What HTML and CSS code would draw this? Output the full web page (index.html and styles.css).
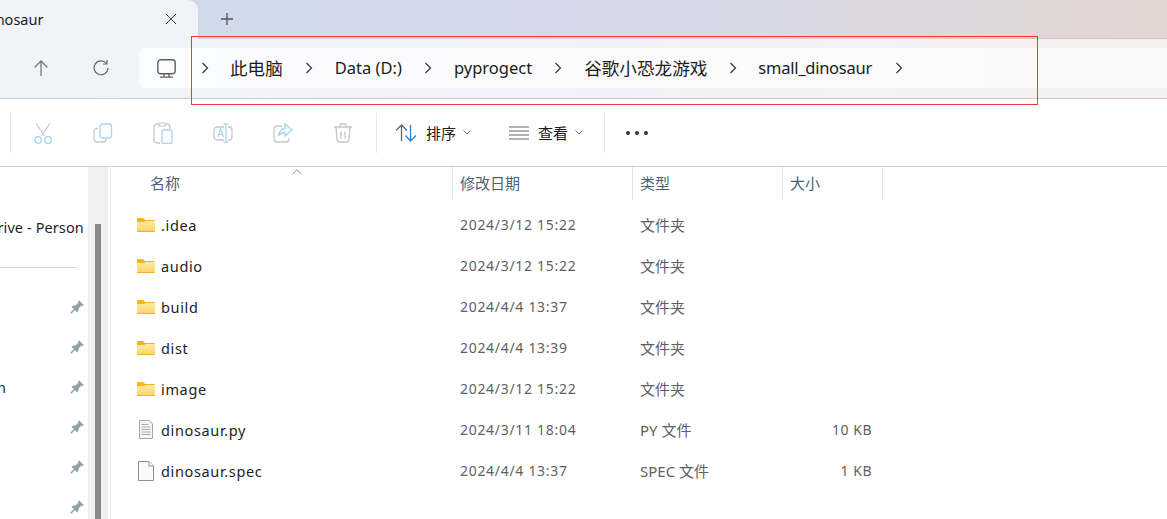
FILE: index.html
```html
<!DOCTYPE html>
<html lang="zh">
<head>
<meta charset="utf-8">
<title>small_dinosaur</title>
<link rel="stylesheet" href="styles.css">
</head>
<body>
<div class="window">
  <svg class="defs" width="0" height="0">
    <defs>
      <linearGradient id="fg" x1="0" y1="0" x2="0" y2="1"><stop offset="0" stop-color="#fdeaa6"/><stop offset="1" stop-color="#ffd460"/></linearGradient>
      <symbol id="folder" viewBox="0 0 18 14"><path d="M0 1a1 1 0 0 1 1-1h5l2 2h9a1 1 0 0 1 1 1v10a1 1 0 0 1-1 1H1a1 1 0 0 1-1-1z" fill="#f6b420"/><path d="M0 4h7l2-1h9v10a1 1 0 0 1-1 1H1a1 1 0 0 1-1-1z" fill="url(#fg)"/><path d="M0 13.5h18" stroke="#eab23c"/></symbol>
      <symbol id="pin" viewBox="0 0 14 14"><path d="M9 .3L13.700 5l-1.300 1-1-.4-2.900 2.900v2.600L7 12.300 1.700 7 3 5.500h2.600l2.900-2.900-.4-1z" fill="#94a1a9"/><path d="M4.500 9.500L.7 13.300" stroke="#94a1a9" stroke-width="1.400" fill="none"/></symbol>
    </defs>
  </svg>

  <header class="tabstrip">
    <div class="tab">
      <span class="tab-label">dinosaur</span>
      <svg class="tab-close" width="12" height="12" viewBox="0 0 12 12"><path d="M1 1l10 10M11 1L1 11" stroke="#3d3d3d" stroke-width="1" fill="none"/></svg>
    </div>
    <svg class="tab-add" width="14" height="14" viewBox="0 0 14 14"><path d="M7 1v12M1 7h12" stroke="#555" stroke-width="1.300" fill="none"/></svg>
  </header>

  <nav class="navbar">
    <button class="nav-btn">
      <svg width="18" height="18" viewBox="0 0 18 18"><path d="M9 2v15M2.500 8.500L9 2l6.500 6.500" stroke="#777" stroke-width="1.300" fill="none"/></svg>
    </button>
    <button class="nav-btn">
      <svg width="18" height="18" viewBox="0 0 18 18"><path d="M14.500 4.500A7 7 0 1 0 16 9" stroke="#666" stroke-width="1.200" fill="none"/><path d="M15 1v4h-4" stroke="#666" stroke-width="1.200" fill="none"/></svg>
    </button>
    <div class="address">
      <svg class="pc-icon" width="19" height="19" viewBox="0 0 19 19"><rect x=".8" y=".8" width="17.400" height="14" rx="3" fill="none" stroke="#5f5f5f" stroke-width="1.400"/><path d="M7 15v3M12 15v3M3 18.200h13" stroke="#5f5f5f" stroke-width="1.300" fill="none"/></svg>
      <svg class="crumb-sep first" width="8" height="12" viewBox="0 0 8 12"><path d="M1.500 1l5 5-5 5" stroke="#333" stroke-width="1.200" fill="none"/></svg>
      <span class="crumb cjk">此电脑</span>
      <svg class="crumb-sep" width="8" height="12" viewBox="0 0 8 12"><path d="M1.500 1l5 5-5 5" stroke="#333" stroke-width="1.200" fill="none"/></svg>
      <span class="crumb">Data (D:)</span>
      <svg class="crumb-sep" width="8" height="12" viewBox="0 0 8 12"><path d="M1.500 1l5 5-5 5" stroke="#333" stroke-width="1.200" fill="none"/></svg>
      <span class="crumb">pyprogect</span>
      <svg class="crumb-sep" width="8" height="12" viewBox="0 0 8 12"><path d="M1.500 1l5 5-5 5" stroke="#333" stroke-width="1.200" fill="none"/></svg>
      <span class="crumb cjk">谷歌小恐龙游戏</span>
      <svg class="crumb-sep" width="8" height="12" viewBox="0 0 8 12"><path d="M1.500 1l5 5-5 5" stroke="#333" stroke-width="1.200" fill="none"/></svg>
      <span class="crumb narrow">small_dinosaur</span>
      <svg class="crumb-sep" width="8" height="12" viewBox="0 0 8 12"><path d="M1.500 1l5 5-5 5" stroke="#333" stroke-width="1.200" fill="none"/></svg>
    </div>
  </nav>

  <section class="commandbar">
    <span class="vsep"></span>
    <button class="cmd"><svg width="20" height="22" viewBox="0 0 20 22"><path d="M3 1l8.500 13M17 1L8.500 14" stroke="#c8c8c8" stroke-width="1.200" fill="none"/><circle cx="5" cy="18" r="3.300" fill="none" stroke="#a8d3f5" stroke-width="1.300"/><circle cx="15" cy="18" r="3.300" fill="none" stroke="#a8d3f5" stroke-width="1.300"/></svg></button>
    <button class="cmd"><svg width="20" height="20" viewBox="0 0 20 20"><path d="M5 5.500H4a3 3 0 0 0-3 3V16a3 3 0 0 0 3 3h6a3 3 0 0 0 3-3v-.500" fill="none" stroke="#c8c8c8" stroke-width="1.300"/><rect x="7" y="1" width="11.500" height="14" rx="2.500" fill="#fff" stroke="#a8d3f5" stroke-width="1.300"/></svg></button>
    <button class="cmd"><svg width="20" height="22" viewBox="0 0 20 22"><path d="M7 21H4a3 3 0 0 1-3-3V5a3 3 0 0 1 3-3h10a3 3 0 0 1 3 3v2" fill="none" stroke="#c8c8c8" stroke-width="1.300"/><rect x="6" y="1" width="6.500" height="3" rx="1" fill="#fff" stroke="#c8c8c8" stroke-width="1.200"/><rect x="9" y="8" width="10" height="13.500" rx="2" fill="#fff" stroke="#a8d3f5" stroke-width="1.300"/></svg></button>
    <button class="cmd"><svg width="20" height="20" viewBox="0 0 20 20"><rect x="1" y="4" width="18" height="13" rx="3" fill="none" stroke="#c8c8c8" stroke-width="1.300"/><rect x="11" y="0" width="4" height="20" fill="#fff"/><path d="M13 1v18M10.500 .8h5M10.500 19.200h5" stroke="#a8d3f5" stroke-width="1.300" fill="none"/><path d="M4.500 14l3-8 3 8M5.500 11.500h4" stroke="#a8d3f5" stroke-width="1.200" fill="none"/></svg></button>
    <button class="cmd"><svg width="20" height="20" viewBox="0 0 20 20"><path d="M9 3H4a3 3 0 0 0-3 3v10a3 3 0 0 0 3 3h9a3 3 0 0 0 3-3v-1" fill="none" stroke="#c8c8c8" stroke-width="1.300"/><path d="M12 1l7 6-7 6V9.500c-3 0-5 1-6.500 3.500 .5-4 3-7 6.500-7.500z" fill="#fff" stroke="#a8d3f5" stroke-width="1.300"/></svg></button>
    <button class="cmd"><svg width="20" height="20" viewBox="0 0 20 20"><path d="M1 4h18M7 4V2a1 1 0 0 1 1-1h4a1 1 0 0 1 1 1v2M3 4l1 13a2.500 2.500 0 0 0 2.500 2h7A2.500 2.500 0 0 0 16 17l1-13M8 8.500v7M12 8.500v7" fill="none" stroke="#c8c8c8" stroke-width="1.300"/></svg></button>
    <span class="vsep gap-left"></span>
    <button class="cmd-text sort">
      <svg width="22" height="18" viewBox="0 0 22 18"><path d="M6.500 17V1M1 6.500l5.500-5.500L12 6.500" stroke="#666" stroke-width="1.300" fill="none"/><path d="M15.500 1v16M10.500 11.500l5 5.500 5.500-5.500" stroke="#1e88e0" stroke-width="1.300" fill="none"/></svg>
      <span class="cmd-label">排序</span>
      <svg class="chev" width="8" height="5" viewBox="0 0 8 5"><path d="M.500 .500L4 4 7.500 .500" stroke="#777" fill="none"/></svg>
    </button>
    <button class="cmd-text view">
      <svg width="20" height="14" viewBox="0 0 20 14"><path d="M0 1h20M0 5h20M0 9h20M0 13h20" stroke="#666" stroke-width="1.200" fill="none"/></svg>
      <span class="cmd-label">查看</span>
      <svg class="chev" width="8" height="5" viewBox="0 0 8 5"><path d="M.500 .500L4 4 7.500 .500" stroke="#777" fill="none"/></svg>
    </button>
    <span class="vsep gap-view"></span>
    <div class="more"><i></i><i></i><i></i></div>
  </section>

  <div class="content">
    <aside class="sidebar">
      <div class="side-item"><span class="side-label onedrive">OneDrive - Personal</span></div>
      <div class="side-rule"></div>
      <div class="side-item"><svg class="side-pin" width="14" height="14"><use href="#pin"/></svg></div>
      <div class="side-item"><svg class="side-pin" width="14" height="14"><use href="#pin"/></svg></div>
      <div class="side-item"><span class="side-label tail">n</span><svg class="side-pin" width="14" height="14"><use href="#pin"/></svg></div>
      <div class="side-item"><svg class="side-pin" width="14" height="14"><use href="#pin"/></svg></div>
      <div class="side-item"><svg class="side-pin" width="14" height="14"><use href="#pin"/></svg></div>
      <div class="side-item"><svg class="side-pin" width="14" height="14"><use href="#pin"/></svg></div>
    </aside>
    <div class="scrolltrack"><div class="scrollthumb"></div></div>

    <main class="files">
      <div class="row head">
        <div class="cell name">名称<svg class="sort-caret" width="10" height="6" viewBox="0 0 10 6"><path d="M.500 5L5 .800 9.500 5" stroke="#8a8a8a" fill="none"/></svg></div>
        <div class="cell">修改日期</div>
        <div class="cell">类型</div>
        <div class="cell">大小</div>
      </div>

      <div class="row item"><div class="cell name"><svg class="ficon" width="18" height="14"><use href="#folder"/></svg><span>.idea</span></div><div class="cell date">2024/3/12 15:22</div><div class="cell type">文件夹</div><div class="cell size"></div></div>
      <div class="row item"><div class="cell name"><svg class="ficon" width="18" height="14"><use href="#folder"/></svg><span>audio</span></div><div class="cell date">2024/3/12 15:22</div><div class="cell type">文件夹</div><div class="cell size"></div></div>
      <div class="row item"><div class="cell name"><svg class="ficon" width="18" height="14"><use href="#folder"/></svg><span>build</span></div><div class="cell date">2024/4/4 13:37</div><div class="cell type">文件夹</div><div class="cell size"></div></div>
      <div class="row item"><div class="cell name"><svg class="ficon" width="18" height="14"><use href="#folder"/></svg><span>dist</span></div><div class="cell date">2024/4/4 13:39</div><div class="cell type">文件夹</div><div class="cell size"></div></div>
      <div class="row item"><div class="cell name"><svg class="ficon" width="18" height="14"><use href="#folder"/></svg><span>image</span></div><div class="cell date">2024/3/12 15:22</div><div class="cell type">文件夹</div><div class="cell size"></div></div>
      <div class="row item"><div class="cell name"><svg class="ficon" width="18" height="19" viewBox="0 0 18 19"><path d="M2.500 .500h9.500l3.500 3.500v14.500h-13z" fill="#f5f5f5" stroke="#a6a6a6"/><path d="M4.500 4.500h7M4.500 7h9M4.500 9.500h9M4.500 12h9M4.500 14.500h9" stroke="#aaa" fill="none"/></svg><span>dinosaur.py</span></div><div class="cell date">2024/3/11 18:04</div><div class="cell type">PY 文件</div><div class="cell size">10 KB</div></div>
      <div class="row item"><div class="cell name"><svg class="ficon" width="18" height="20" viewBox="0 0 18 20"><path d="M1.500 .500h10.500l4.500 4.500v14.500h-15z" fill="#fafafa" stroke="#8f8f8f"/><path d="M12 .500v4.500h4.500" fill="#fff" stroke="#8f8f8f"/></svg><span>dinosaur.spec</span></div><div class="cell date">2024/4/4 13:37</div><div class="cell type">SPEC 文件</div><div class="cell size">1 KB</div></div>
    </main>
  </div>

  <div class="callout"></div>
</div>
</body>
</html>
```
FILE: styles.css
```css
* { box-sizing: border-box; }
html, body { margin: 0; padding: 0; }
body {
  font-family: "Noto Sans", "Noto Sans CJK SC", sans-serif;
  color: #1b1b1b;
  background: #fff;
}
.window {
  position: relative;
  width: 1167px;
  height: 519px;
  overflow: hidden;
  display: flex;
  flex-direction: column;
}
.defs { position: absolute; }
button { border: 0; background: none; padding: 0; font: inherit; color: inherit; }

.tabstrip {
  height: 39px;
  flex: none;
  display: flex;
  align-items: center;
  background: linear-gradient(90deg, #cfdbea 0%, #d2d9ea 40%, #d8d8e6 65%, #e4d6d1 100%);
  border-bottom: 1px solid;
  border-image: linear-gradient(90deg, #c5d0e2, #cfc5c2) 1;
}
.tab {
  width: 198px;
  height: 39px;
  flex: none;
  display: flex;
  align-items: center;
  background: #f0f4f9;
  border-top-right-radius: 10px;
  overflow: hidden;
  padding-bottom: 2px;
  align-self: flex-start;
}
.tab-label {
  font-size: 14.5px;
  margin-left: -17px;
  white-space: nowrap;
}
.tab-close { margin-left: 122px; }
.tab-add { margin-left: 22px; }

.navbar {
  height: 60px;
  flex: none;
  display: flex;
  align-items: center;
  padding-left: 11px;
  padding-bottom: 1px;
  background: linear-gradient(90deg, #f0f4f9 0%, #f1f3f9 45%, #f5f1f0 100%);
  border-bottom: 1px solid;
  border-image: linear-gradient(90deg, #c5d0e2, #cfc5c2) 1;
}
.nav-btn {
  width: 60px;
  height: 40px;
  display: flex;
  align-items: center;
  justify-content: center;
}
.nav-btn + .nav-btn { margin-right: 8px; }
.address {
  flex: 1;
  height: 40px;
  display: flex;
  align-items: center;
  padding-left: 18px;
  background: linear-gradient(90deg, #fbfcfe, #fbfafa);
  border-radius: 6px 0 0 6px;
}
.pc-icon { flex: none; margin-right: 25px; }
.crumb {
  font-size: 16.5px;
  line-height: 40px;
  white-space: nowrap;
}
.cjk { font-size: 17.6px; }
.narrow { letter-spacing: -.25px; margin: 0 1px 0 -1px; }
.crumb-sep { flex: none; margin: 0 22px; }
.crumb-sep.first { margin: 0 21px 0 0; }

.commandbar {
  height: 68px;
  flex: none;
  display: flex;
  align-items: center;
  padding-left: 10px;
  background: #fff;
  border-bottom: 1px solid;
  border-image: linear-gradient(90deg, #c9d2e2, #d3cbc9) 1;
}
.vsep { width: 1px; height: 40px; background: #e8e8e8; flex: none; }
.gap-left { margin-left: 3px; }
.cmd {
  width: 60px;
  height: 40px;
  flex: none;
  display: flex;
  align-items: center;
  justify-content: center;
}
.vsep + .cmd { margin-left: 2px; }
.cmd-text {
  display: flex;
  align-items: center;
  height: 40px;
  flex: none;
}
.sort { margin-left: 18px; }
.view { margin-left: 38px; }
.cmd-label {
  font-size: 15px;
  margin: 0 7px 0 9px;
  white-space: nowrap;
}
.gap-view { margin-left: 21px; }
.more { display: flex; gap: 5px; margin-left: 21px; }
.more i { width: 4px; height: 4px; border-radius: 50%; background: #333; display: block; }

.content { flex: 1; display: flex; min-height: 0; }
.sidebar {
  width: 88px;
  flex: none;
  padding-top: 40px;
  overflow: hidden;
  background: #fff;
}
.side-item {
  height: 40px;
  display: flex;
  align-items: center;
  justify-content: flex-end;
  padding-right: 4px;
  white-space: nowrap;
}
.side-label { font-size: 14.5px; color: #1f1f1f; }
.onedrive {
  flex: none;
  width: 126px;
  margin-left: -40px;
  margin-right: auto;
  letter-spacing: .1px;
  overflow: hidden;
}
.tail { margin-right: auto; margin-left: -3px; }
.side-rule { height: 40px; display: flex; align-items: center; }
.side-rule::before { content: ""; width: 77px; height: 1px; background: #d9d9d9; }
.scrolltrack {
  width: 20px;
  flex: none;
  background: #f0f0f0;
  padding-top: 57px;
  padding-left: 7px;
  margin-right: 2px;
}
.scrollthumb { width: 6px; height: 100%; background: #8a8a8a; }

.files { flex: 1; border-left: 1px solid #f0f0f0; min-width: 0; }
.row {
  display: grid;
  grid-template-columns: 342px 180px 150px 101px;
  align-items: center;
  margin-left: -1px;
}
.head { height: 33px; font-size: 15px; line-height: 1; color: #4b5f78; align-items: stretch; }
.head .cell { display: flex; align-items: center; padding: 0 0 1px 7px; border-left: 1px solid #e4e4e4; position: relative; }
.head .cell:last-child { border-right: 1px solid #e4e4e4; }
.head .name { border-left: 0; padding-left: 40px; }
.sort-caret { position: absolute; left: 182px; top: 2px; }
.item { height: 41px; }
.head + .item { margin-top: 4px; }
.cell { min-width: 0; white-space: nowrap; }
.item .name {
  display: flex;
  align-items: center;
  font-size: 14.5px;
  padding-left: 27px;
  letter-spacing: .65px;
  color: #1d1d1d;
}
.ficon { flex: none; margin-right: 6px; }
.date { font-size: 14px; color: #5f5f5f; padding-left: 8px; letter-spacing: .7px; }
.type { font-size: 15px; color: #5f5f5f; padding-left: 8px; }
.size { font-size: 14px; color: #5f5f5f; text-align: right; padding-right: 11px; letter-spacing: .5px; }
.side-pin { flex: none; }

.callout {
  position: absolute;
  left: 191px;
  top: 36px;
  width: 847px;
  height: 69px;
  border: 1px solid #f03a3a;
  pointer-events: none;
}
```
